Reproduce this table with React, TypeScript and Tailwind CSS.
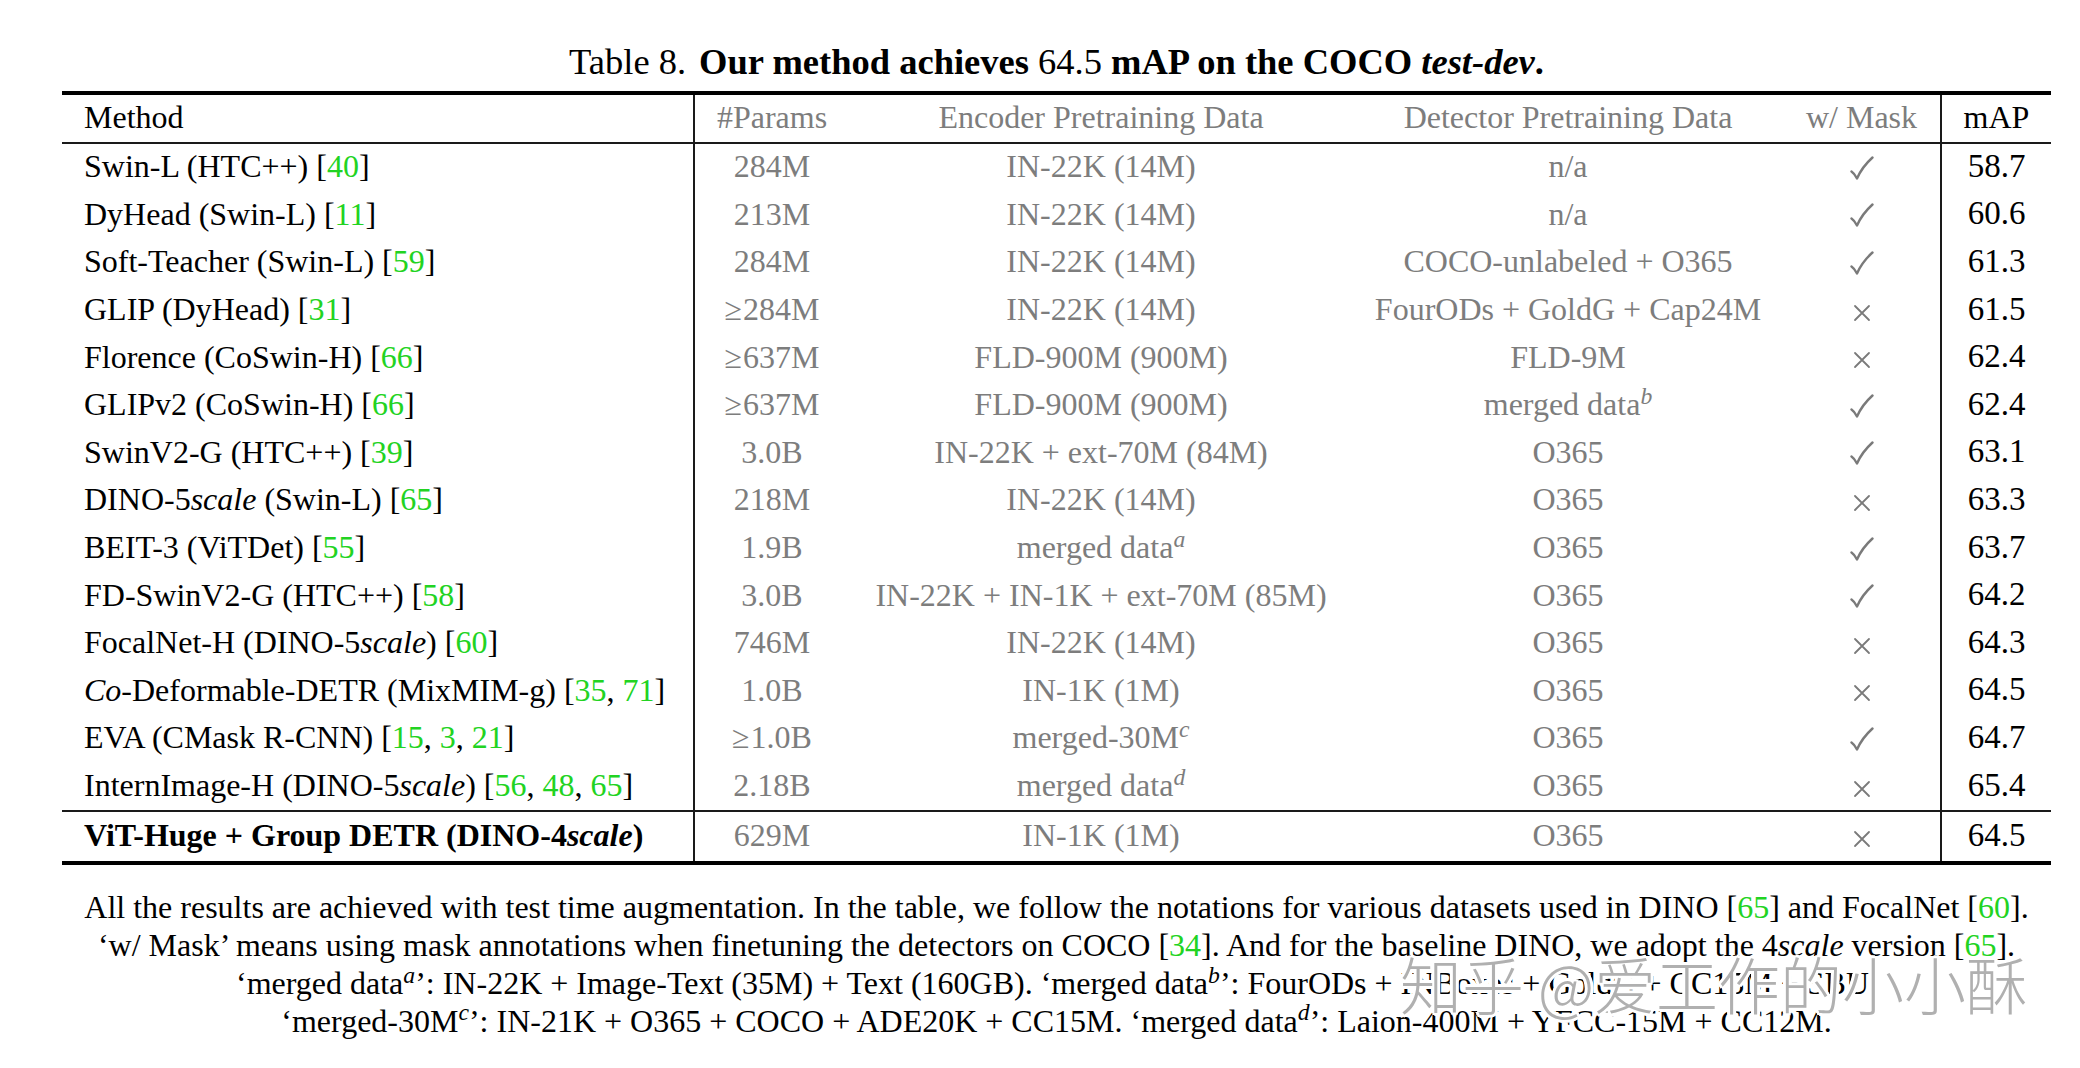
import React from 'react';

// 셀 안의 인용 번호 (초록색)
function Cite({ n }: { n: number[] }) {
	return (
		<>
			[
			{n.map((v, i) => (
				<React.Fragment key={v + '-' + i}>
					{i > 0 && ', '}
					<span className="text-[#22d322]">{v}</span>
				</React.Fragment>
			))}
			]
		</>
	);
}

function Sup({ c }: { c: string }) {
	return <sup className="italic text-[0.74em] -top-[0.48em]">{c}</sup>;
}

function Check() {
	return (
		<svg width="24" height="24" viewBox="0 0 24 24" className="block">
			<path d="M1.5 15.5 Q4.5 17.5 7 22.5 Q12 11 22.5 1.5" fill="none" stroke="#7a7a7a" strokeWidth="2.4" strokeLinecap="round" strokeLinejoin="round" />
		</svg>
	);
}

function Cross() {
	return (
		<svg width="18" height="18" viewBox="0 0 18 18" className="block mt-[4px]">
			<path d="M2 2 L16 16 M16 2 L2 16" stroke="#7a7a7a" strokeWidth="1.8" strokeLinecap="round" />
		</svg>
	);
}

type Row = {
	method: React.ReactNode;
	params: React.ReactNode;
	encoder: React.ReactNode;
	detector: React.ReactNode;
	mask: boolean;
	map: string;
};

const geq = <span className="mr-[1px]">≥</span>;

const rows: Row[] = [
	{ method: <>Swin-L (HTC++) <Cite n={[40]} /></>, params: '284M', encoder: 'IN-22K (14M)', detector: 'n/a', mask: true, map: '58.7' },
	{ method: <>DyHead (Swin-L) <Cite n={[11]} /></>, params: '213M', encoder: 'IN-22K (14M)', detector: 'n/a', mask: true, map: '60.6' },
	{ method: <>Soft-Teacher (Swin-L) <Cite n={[59]} /></>, params: '284M', encoder: 'IN-22K (14M)', detector: 'COCO-unlabeled + O365', mask: true, map: '61.3' },
	{ method: <>GLIP (DyHead) <Cite n={[31]} /></>, params: <>{geq}284M</>, encoder: 'IN-22K (14M)', detector: 'FourODs + GoldG + Cap24M', mask: false, map: '61.5' },
	{ method: <>Florence (CoSwin-H) <Cite n={[66]} /></>, params: <>{geq}637M</>, encoder: 'FLD-900M (900M)', detector: 'FLD-9M', mask: false, map: '62.4' },
	{ method: <>GLIPv2 (CoSwin-H) <Cite n={[66]} /></>, params: <>{geq}637M</>, encoder: 'FLD-900M (900M)', detector: <>merged data<Sup c="b" /></>, mask: true, map: '62.4' },
	{ method: <>SwinV2-G (HTC++) <Cite n={[39]} /></>, params: '3.0B', encoder: 'IN-22K + ext-70M (84M)', detector: 'O365', mask: true, map: '63.1' },
	{ method: <>DINO-5<i>scale</i> (Swin-L) <Cite n={[65]} /></>, params: '218M', encoder: 'IN-22K (14M)', detector: 'O365', mask: false, map: '63.3' },
	{ method: <>BEIT-3 (ViTDet) <Cite n={[55]} /></>, params: '1.9B', encoder: <>merged data<Sup c="a" /></>, detector: 'O365', mask: true, map: '63.7' },
	{ method: <>FD-SwinV2-G (HTC++) <Cite n={[58]} /></>, params: '3.0B', encoder: 'IN-22K + IN-1K + ext-70M (85M)', detector: 'O365', mask: true, map: '64.2' },
	{ method: <>FocalNet-H (DINO-5<i>scale</i>) <Cite n={[60]} /></>, params: '746M', encoder: 'IN-22K (14M)', detector: 'O365', mask: false, map: '64.3' },
	{ method: <><i>Co</i>-Deformable-DETR (MixMIM-g) <Cite n={[35, 71]} /></>, params: '1.0B', encoder: 'IN-1K (1M)', detector: 'O365', mask: false, map: '64.5' },
	{ method: <>EVA (CMask R-CNN) <Cite n={[15, 3, 21]} /></>, params: <>{geq}1.0B</>, encoder: <>merged-30M<Sup c="c" /></>, detector: 'O365', mask: true, map: '64.7' },
	{ method: <>InternImage-H (DINO-5<i>scale</i>) <Cite n={[56, 48, 65]} /></>, params: '2.18B', encoder: <>merged data<Sup c="d" /></>, detector: 'O365', mask: false, map: '65.4' },
];

const ours: Row = {
	method: (
		<b>
			ViT-Huge + Group DETR (DINO-4<i>scale</i>)
		</b>
	),
	params: '629M',
	encoder: 'IN-1K (1M)',
	detector: 'O365',
	mask: false,
	map: '64.5',
};

const gridCols = 'grid grid-cols-[633px_154px_504px_430px_159px_109px]';

function TableRow({ row, h }: { row: Row; h: string }) {
	return (
		<div className={`${gridCols} ${h}`}>
			<div className="flex items-center pl-[22px] pb-[3px] border-r-2 border-[#1a1a1a] whitespace-nowrap">
				<span>{row.method}</span>
			</div>
			<div className="flex items-center justify-center pb-[3px] text-[#7d7d7d]">
				<span>{row.params}</span>
			</div>
			<div className="flex items-center justify-center pb-[3px] text-[#7d7d7d] whitespace-nowrap">
				<span>{row.encoder}</span>
			</div>
			<div className="flex items-center justify-center pb-[3px] text-[#7d7d7d] whitespace-nowrap">
				<span>{row.detector}</span>
			</div>
			<div className="flex items-center justify-center border-r-2 border-[#1a1a1a]">{row.mask ? <Check /> : <Cross />}</div>
			<div className="flex items-center justify-center pb-[3px] text-[33px]">
				<span>{row.map}</span>
			</div>
		</div>
	);
}

export default function App() {
	return (
		<div className="relative w-[2080px] h-[1068px] bg-white text-black font-['Liberation_Serif',serif] overflow-hidden">
			<div className="ml-[62px] w-[1989px]">
				{/* 표 제목 */}
				<div className="h-[91px] pt-[44px] text-center text-[36.5px] leading-[36px] whitespace-nowrap">
					<span>Table 8.</span>
					<span className="ml-[13px] font-bold">Our method achieves </span>
					<span>64.5</span>
					<span className="font-bold">
						{' '}mAP on the COCO <i>test-dev</i>.
					</span>
				</div>

				{/* 표 */}
				<div className="text-[32px] leading-none">
					<div className="h-[4px] bg-black" />
					<div className={`${gridCols} h-[47px]`}>
						<div className="flex items-center pl-[22px] pb-[3px] border-r-2 border-[#1a1a1a]">Method</div>
						<div className="flex items-center justify-center pb-[3px] text-[#7d7d7d]">#Params</div>
						<div className="flex items-center justify-center pb-[3px] text-[#7d7d7d]">Encoder Pretraining Data</div>
						<div className="flex items-center justify-center pb-[3px] text-[#7d7d7d]">Detector Pretraining Data</div>
						<div className="flex items-center justify-center pb-[3px] text-[#7d7d7d] border-r-2 border-[#1a1a1a]">w/ Mask</div>
						<div className="flex items-center justify-center pb-[3px]">mAP</div>
					</div>
					<div className="h-[2px] bg-[#1a1a1a]" />
					{rows.map((r, i) => (
						<TableRow key={i} row={r} h="h-[47.6px]" />
					))}
					<div className="h-[2px] bg-[#1a1a1a]" />
					<TableRow row={ours} h="h-[49px]" />
					<div className="h-[4px] bg-black" />
				</div>

				{/* 주석 */}
				<div className="mt-[24px] text-center text-[32px] leading-[37.8px] whitespace-nowrap">
					<div>
						All the results are achieved with test time augmentation. In the table, we follow the notations for various datasets used in DINO <Cite n={[65]} /> and FocalNet <Cite n={[60]} />.
					</div>
					<div>
						‘w/ Mask’ means using mask annotations when finetuning the detectors on COCO <Cite n={[34]} />. And for the baseline DINO, we adopt the 4<i>scale</i> version <Cite n={[65]} />.
					</div>
					<div>
						‘merged data<Sup c="a" />’: IN-22K + Image-Text (35M) + Text (160GB). ‘merged data<Sup c="b" />’: FourODs + INBoxes + GoldG + CC15M + SBU.
					</div>
					<div>
						‘merged-30M<Sup c="c" />’: IN-21K + O365 + COCO + ADE20K + CC15M. ‘merged data<Sup c="d" />’: Laion-400M + YFCC-15M + CC12M.
					</div>
				</div>
			</div>

			{/* 워터마크 */}
			<div className="absolute left-[1400px] top-[952px] text-[62px] font-light leading-none whitespace-nowrap text-[#b0b0b0] font-['Noto_Sans_CJK_SC',sans-serif] [text-shadow:3px_0_0_#fff,-3px_0_0_#fff,0_3px_0_#fff,0_-3px_0_#fff,2px_2px_0_#fff,-2px_-2px_0_#fff,2px_-2px_0_#fff,-2px_2px_0_#fff]">
				知乎 @爱工作的小小酥
			</div>
		</div>
	);
}
